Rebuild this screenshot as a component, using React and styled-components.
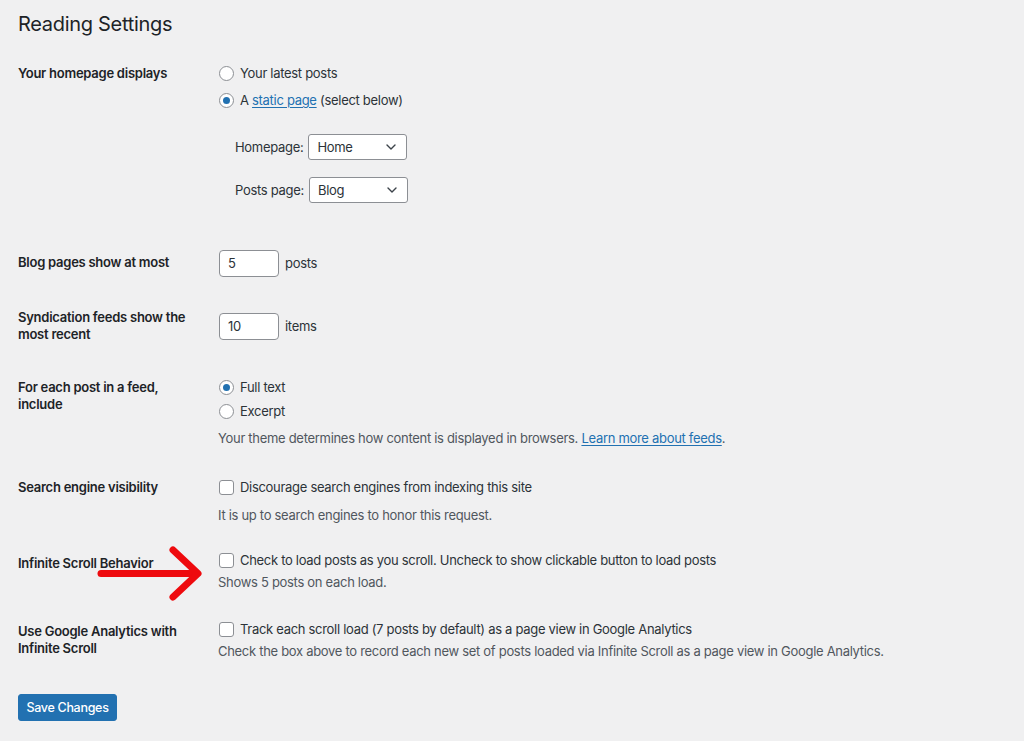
import React from 'react';
import styled, { createGlobalStyle } from 'styled-components';

const Global = createGlobalStyle`
  html, body { margin: 0; padding: 0; background: #f0f0f1; }
  body {
    font-family: Inter, "Liberation Sans", Arial, sans-serif;
    color: #1d2327;
    font-size: 13px;
    letter-spacing: -0.3px;
  }
  * { box-sizing: border-box; }
`;

const Page = styled.div`
  position: relative;
  width: 1024px;
  height: 741px;
  overflow: hidden;
  padding: 12px 18px 0;
`;

const Title = styled.h1`
  margin: 0;
  font-size: 20px;
  font-weight: 400;
  line-height: 24px;
  letter-spacing: -0.3px;
  color: #1d2327;
`;

const Row = styled.div`
  display: grid;
  grid-template-columns: 200px 1fr;
  align-items: ${p => (p.$center ? 'center' : 'start')};
  margin-top: ${p => p.$mt}px;
`;

const Label = styled.div`
  font-weight: 600;
  line-height: 17.5px;
  letter-spacing: -0.25px;
  color: #1d2327;
  padding-top: ${p => p.$pt || 0}px;
`;

const Field = styled.div`
  display: flex;
  flex-direction: column;
  align-items: flex-start;
`;

const ChoiceLine = styled.label`
  display: flex;
  align-items: center;
  gap: 6px;
  line-height: 17.5px;
  color: #2c3338;
  margin-top: ${p => p.$mt || 0}px;
`;

const RadioMark = styled.span`
  width: 15px;
  height: 15px;
  margin-left: 1px;
  border-radius: 50%;
  border: 1px solid #8c8f94;
  background: #fff;
  display: inline-flex;
  align-items: center;
  justify-content: center;
  flex: none;
  &::after {
    content: '';
    width: 7px;
    height: 7px;
    border-radius: 50%;
    background: ${p => (p.$checked ? '#2271b1' : 'transparent')};
  }
`;

const CheckMark = styled.span`
  width: 15px;
  height: 15px;
  margin-left: 1px;
  border-radius: 3px;
  border: 1px solid #8c8f94;
  background: #fff;
  flex: none;
`;

const Link = styled.a`
  color: #2271b1;
  text-decoration: underline;
  text-underline-offset: 2px;
`;

const SubList = styled.div`
  display: flex;
  flex-direction: column;
  gap: 17px;
  margin-top: 24px;
  padding-left: 17px;
`;

const SubRow = styled.div`
  display: flex;
  align-items: center;
  gap: 5px;
  color: #2c3338;
`;

const Select = styled.div`
  width: 99px;
  height: 26px;
  background: #fff;
  border: 1px solid #8c8f94;
  border-radius: 3px;
  display: flex;
  align-items: center;
  justify-content: space-between;
  padding: 0 10px 0 8px;
  color: #2c3338;
`;

const InlineField = styled.div`
  display: flex;
  align-items: center;
  gap: 6px;
  color: #2c3338;
`;

const NumberInput = styled.div`
  width: 60px;
  height: 27px;
  margin-left: 1px;
  background: #fff;
  border: 1px solid #8c8f94;
  border-radius: 4px;
  display: flex;
  align-items: center;
  padding-left: 8px;
  color: #2c3338;
`;

const Description = styled.p`
  margin: ${p => p.$mt || 0}px 0 0;
  line-height: 17.5px;
  color: #50575e;
`;

const Button = styled.button`
  margin-top: 33.5px;
  width: 99px;
  height: 27px;
  background: #2271b1;
  border: 1px solid #2271b1;
  border-radius: 3px;
  color: #fff;
  font-family: inherit;
  font-size: 12.5px;
  font-weight: 500;
  letter-spacing: -0.3px;
  padding: 0;
`;

const Overlay = styled.svg`
  position: absolute;
  left: 0;
  top: 0;
  pointer-events: none;
`;

const Chevron = () => (
  <svg width="10" height="6" viewBox="0 0 10 6">
    <path d="M1 1l4 4 4-4" fill="none" stroke="#3c434a" strokeWidth="1.4" strokeLinecap="round" strokeLinejoin="round" />
  </svg>
);

export default function App() {
  return (
    <>
      <Global />
      <Page>
        <Title>Reading Settings</Title>

        <Row $mt={29}>
          <Label>Your homepage displays</Label>
          <Field>
            <ChoiceLine><RadioMark />Your latest posts</ChoiceLine>
            <ChoiceLine $mt={9.5}>
              <RadioMark $checked />
              <span>A <Link>static page</Link> (select below)</span>
            </ChoiceLine>
            <SubList>
              <SubRow>Homepage: <Select>Home<Chevron /></Select></SubRow>
              <SubRow>Posts page: <Select>Blog<Chevron /></Select></SubRow>
            </SubList>
          </Field>
        </Row>

        <Row $mt={47} $center>
          <Label>Blog pages show at most</Label>
          <InlineField><NumberInput>5</NumberInput>posts</InlineField>
        </Row>

        <Row $mt={32} $center>
          <Label>Syndication feeds show the<br />most recent</Label>
          <InlineField><NumberInput>10</NumberInput>items</InlineField>
        </Row>

        <Row $mt={35}>
          <Label>For each post in a feed,<br />include</Label>
          <Field>
            <ChoiceLine><RadioMark $checked />Full text</ChoiceLine>
            <ChoiceLine $mt={6.5}><RadioMark />Excerpt</ChoiceLine>
            <Description $mt={9.5}>
              Your theme determines how content is displayed in browsers. <Link>Learn more about feeds</Link>.
            </Description>
          </Field>
        </Row>

        <Row $mt={31.5}>
          <Label>Search engine visibility</Label>
          <Field>
            <ChoiceLine><CheckMark />Discourage search engines from indexing this site</ChoiceLine>
            <Description $mt={10.5}>It is up to search engines to honor this request.</Description>
          </Field>
        </Row>

        <Row $mt={27.5}>
          <Label $pt={3}>Infinite Scroll Behavior</Label>
          <Field>
            <ChoiceLine><CheckMark />Check to load posts as you scroll. Uncheck to show clickable button to load posts</ChoiceLine>
            <Description $mt={4.5}>Shows 5 posts on each load.</Description>
          </Field>
        </Row>

        <Row $mt={29.5}>
          <Label $pt={2}>Use Google Analytics with<br />Infinite Scroll</Label>
          <Field>
            <ChoiceLine><CheckMark />Track each scroll load (7 posts by default) as a page view in Google Analytics</ChoiceLine>
            <Description $mt={4.5}>Check the box above to record each new set of posts loaded via Infinite Scroll as a page view in Google Analytics.</Description>
          </Field>
        </Row>

        <Button>Save Changes</Button>

        <Overlay width="1024" height="741" viewBox="0 0 1024 741">
          <g fill="none" stroke="#ee0a0e" strokeWidth="7" strokeLinecap="round" strokeLinejoin="round">
            <path d="M101 573.5H196" />
            <path d="M173 550L198 573.5L173 597" />
          </g>
        </Overlay>
      </Page>
    </>
  );
}
